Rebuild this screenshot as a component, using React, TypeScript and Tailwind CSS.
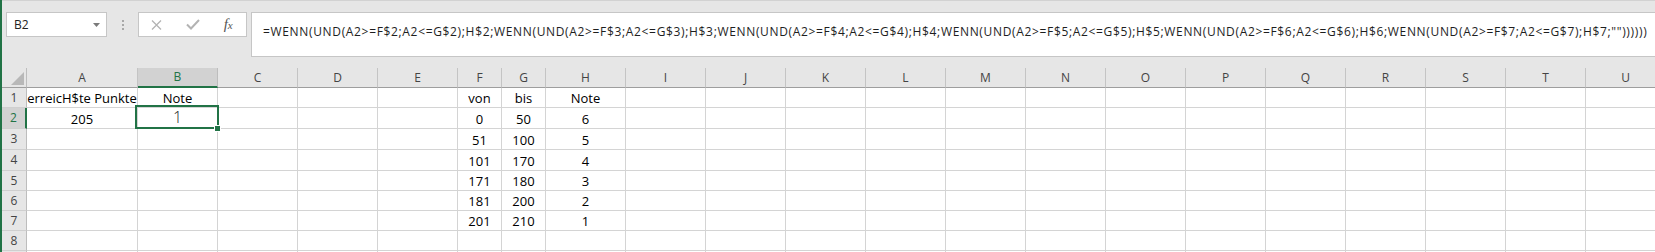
import React from 'react';

// Excel-style sheet: formula bar + small grid with a grade lookup table

const COLS = [
  { l: 'A', w: 'w-[111px]' },
  { l: 'B', w: 'w-[80px]' },
  { l: 'C', w: 'w-[80px]' },
  { l: 'D', w: 'w-[80px]' },
  { l: 'E', w: 'w-[80px]' },
  { l: 'F', w: 'w-[44px]' },
  { l: 'G', w: 'w-[44px]' },
  { l: 'H', w: 'w-[80px]' },
  { l: 'I', w: 'w-[80px]' },
  { l: 'J', w: 'w-[80px]' },
  { l: 'K', w: 'w-[80px]' },
  { l: 'L', w: 'w-[80px]' },
  { l: 'M', w: 'w-[80px]' },
  { l: 'N', w: 'w-[80px]' },
  { l: 'O', w: 'w-[80px]' },
  { l: 'P', w: 'w-[80px]' },
  { l: 'Q', w: 'w-[80px]' },
  { l: 'R', w: 'w-[80px]' },
  { l: 'S', w: 'w-[80px]' },
  { l: 'T', w: 'w-[80px]' },
  { l: 'U', w: 'w-[80px]' },
];

// row 9 only peeks in by a pixel, so it carries no label
const ROWS = [
  { n: 1, h: 'h-[20px]' },
  { n: 2, h: 'h-[21px]' },
  { n: 3, h: 'h-[21px]' },
  { n: 4, h: 'h-[21px]' },
  { n: 5, h: 'h-[20px]' },
  { n: 6, h: 'h-[20px]' },
  { n: 7, h: 'h-[20px]' },
  { n: 8, h: 'h-[20px]' },
  { n: 9, h: 'h-[20px]' },
];

const CELLS: Record<string, string> = {
  A1: 'erreicH$te Punkte',
  B1: 'Note',
  F1: 'von',
  G1: 'bis',
  H1: 'Note',
  A2: '205',
  F2: '0', G2: '50', H2: '6',
  F3: '51', G3: '100', H3: '5',
  F4: '101', G4: '170', H4: '4',
  F5: '171', G5: '180', H5: '3',
  F6: '181', G6: '200', H6: '2',
  F7: '201', G7: '210', H7: '1',
};

const FORMULA =
  '=WENN(UND(A2>=F$2;A2<=G$2);H$2;WENN(UND(A2>=F$3;A2<=G$3);H$3;WENN(UND(A2>=F$4;A2<=G$4);H$4;WENN(UND(A2>=F$5;A2<=G$5);H$5;WENN(UND(A2>=F$6;A2<=G$6);H$6;WENN(UND(A2>=F$7;A2<=G$7);H$7;""))))))';

export default function App() {
  return (
    <div className="relative w-[1655px] h-[252px] overflow-hidden bg-white flex font-['Open_Sans',sans-serif]">
      {/* window edge */}
      <div className="w-[2px] shrink-0 bg-[#217346]" />

      <div className="flex-1 flex flex-col min-w-0">
        {/* Name box + formula bar */}
        <div className="h-[68px] shrink-0 bg-[#e6e6e6] border-t border-[#d2d2d2] flex items-start pt-[11px]">
          <div className="ml-[4px] w-[101px] h-[25px] bg-white border border-[#c6c6c6] flex items-center justify-between pl-[7px] pr-[6px]">
            <span className="text-[12px] text-[#222] leading-none">B2</span>
            <svg width="7" height="4" viewBox="0 0 7 4">
              <path d="M0 0h7L3.5 4z" fill="#7a7a7a" />
            </svg>
          </div>

          <div className="w-[31px] h-[25px] flex flex-col items-center justify-center gap-[2px]">
            <div className="w-[2px] h-[2px] bg-[#a8a8a8]" />
            <div className="w-[2px] h-[2px] bg-[#a8a8a8]" />
            <div className="w-[2px] h-[2px] bg-[#a8a8a8]" />
          </div>

          <div className="w-[109px] h-[25px] bg-white border border-[#c6c6c6] flex">
            <div className="w-[36px] flex items-center justify-center">
              <svg width="11" height="10" viewBox="0 0 11 10">
                <path d="M1 0.5l9 9M10 0.5l-9 9" stroke="#b3b3b3" strokeWidth="1.3" />
              </svg>
            </div>
            <div className="w-[36px] flex items-center justify-center">
              <svg width="14" height="11" viewBox="0 0 14 11">
                <path d="M1 5.5l4 4L13 1" stroke="#b3b3b3" strokeWidth="2" fill="none" />
              </svg>
            </div>
            <div className="w-[36px] flex items-center justify-center">
              <span className="font-['Liberation_Serif',serif] italic text-[15px] text-[#555] leading-none">
                f<span className="text-[11px]">x</span>
              </span>
            </div>
          </div>

          <div className="ml-[4px] flex-1 h-[45px] bg-white border border-r-0 border-[#c6c6c6] pl-[11px] pt-[5px] overflow-hidden">
            <span className="whitespace-nowrap text-[12px] tracking-[0.66px] text-[#1e1e1e] leading-[normal]">
              {FORMULA}
            </span>
          </div>
        </div>

        {/* Grid */}
        <div className="flex-1 flex flex-col">
          {/* column headers */}
          <div className="h-[20px] shrink-0 flex bg-[#e6e6e6]">
            <div className="w-[25px] shrink-0 border-r border-b border-r-[#bdbdbd] border-b-[#9e9e9e] flex items-end justify-end pr-[2px] pb-[2px]">
              <svg width="13" height="13" viewBox="0 0 13 13">
                <path d="M13 0V13H0z" fill="#b8b8b8" />
              </svg>
            </div>
            {COLS.map((c) => {
              const sel = c.l === 'B';
              return (
                <div
                  key={c.l}
                  className={
                    sel
                      ? `${c.w} shrink-0 bg-[#d2d2d2] border-r border-r-[#bdbdbd] border-b-2 border-b-[#217346] flex items-center justify-center text-[12px] text-[#217346]`
                      : `${c.w} shrink-0 border-r border-b border-r-[#c4c4c4] border-b-[#9e9e9e] flex items-center justify-center text-[12px] text-[#444]`
                  }
                >
                  {c.l}
                </div>
              );
            })}
          </div>

          {/* rows */}
          {ROWS.map((r) => {
            const sel = r.n === 2;
            return (
              <div key={r.n} className={`${r.h} shrink-0 flex`}>
                <div
                  className={
                    sel
                      ? 'w-[25px] shrink-0 bg-[#d2d2d2] border-r-2 border-r-[#217346] border-b border-b-[#cfcfcf] flex items-center justify-center text-[12px] text-[#217346]'
                      : 'w-[25px] shrink-0 bg-[#e6e6e6] border-r border-b border-r-[#bdbdbd] border-b-[#cfcfcf] flex items-center justify-center text-[12px] text-[#444]'
                  }
                >
                  {r.n < 9 ? r.n : null}
                </div>
                {COLS.map((c) => {
                  const key = `${c.l}${r.n}`;
                  const v = CELLS[key];
                  // only column A clips its overflowing label
                  const clip = c.l === 'A' ? 'overflow-hidden' : '';
                  return (
                    <div
                      key={key}
                      className={`${c.w} ${clip} shrink-0 border-r border-b border-[#d4d4d4] flex items-end justify-center`}
                    >
                      {key === 'B2' ? (
                        <span className="whitespace-nowrap text-[16px] font-light text-[#222] leading-[17px] mb-[2px]">1</span>
                      ) : v ? (
                        <span className="whitespace-nowrap text-[13px] text-black leading-[normal]">{v}</span>
                      ) : null}
                    </div>
                  );
                })}
              </div>
            );
          })}
        </div>
      </div>

      {/* active cell B2 */}
      <div className="absolute left-[135px] top-[105px] w-[84px] h-[24px] border-2 border-[#217346] pointer-events-none" />
      <div className="absolute left-[214px] top-[125px] w-[7px] h-[7px] bg-[#217346] border border-white" />
    </div>
  );
}
